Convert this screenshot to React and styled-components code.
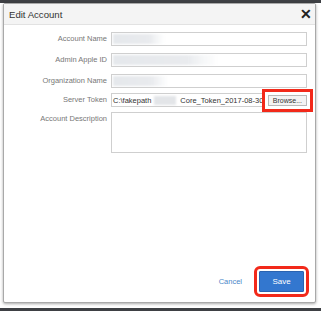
import { Fragment } from 'react'
import styled, { createGlobalStyle } from 'styled-components'

const Global = createGlobalStyle`
  html, body { margin: 0; padding: 0; background: #fff; }
  body { font-family: "Liberation Sans", Arial, sans-serif; }
`

const Page = styled.div`
  width: 321px;
  height: 311px;
  display: flex;
  flex-direction: column;
  background: #fff;
  overflow: hidden;
`

const Strip = styled.div`
  height: 3px;
  flex-shrink: 0;
  background: #3e4044;
`

const Dialog = styled.div`
  margin: 0 5px 0 3px;
  height: 298px;
  border: 1px solid #a9a9a9;
  border-radius: 2px;
  box-shadow: 0 1px 3px rgba(0, 0, 0, 0.35);
  display: flex;
  flex-direction: column;
  background: #fff;
`

const Header = styled.div`
  height: 20px;
  display: flex;
  align-items: center;
  justify-content: space-between;
  padding: 0 3px 0 5px;
  background: #f4f4f4;
  border-bottom: 1px solid #e2e2e2;
  color: #333;
  font-size: 9.6px;
`

const Close = styled.span`
  font-size: 14px;
  font-weight: bold;
  color: #222;
  line-height: 1;
`

const Form = styled.div`
  display: grid;
  grid-template-columns: 103px minmax(0, 1fr);
  column-gap: 4px;
  padding: 7px 8px 0 0;
`

const Label = styled.div`
  text-align: right;
  color: #777;
  font-size: 7.5px;
  line-height: 14px;
  margin-top: ${p => p.$top || 0}px;
`

const Input = styled.div`
  height: 12px;
  border: 1px solid #cfcfcf;
  display: flex;
  align-items: center;
  margin-top: ${p => p.$top || 0}px;
  overflow: hidden;
`

const Blur = styled.span`
  height: 10px;
  width: ${p => p.$w}px;
  margin-left: 1px;
  background: linear-gradient(90deg, #e5e8ec 0%, #e9ebee 70%, rgba(240, 242, 244, 0.7) 85%, rgba(255, 255, 255, 0) 100%);
  filter: blur(0.8px);
`

const TokenRow = styled.div`
  display: flex;
  align-items: center;
  gap: 3px;
  min-width: 0;
  margin-top: ${p => p.$top || 0}px;
`

const TokenField = styled.div`
  flex: 1;
  min-width: 0;
  height: 12px;
  border: 1px solid #cfcfcf;
  display: flex;
  align-items: center;
  padding-left: 1px;
  font-size: 7.5px;
  color: #333;
  white-space: nowrap;
  overflow: hidden;
`

const TokenBlur = styled.span`
  display: inline-block;
  flex-shrink: 0;
  width: 22px;
  height: 9px;
  margin: 0 4px 0 3px;
  background: #e3e5e8;
  filter: blur(1px);
`

const BrowseButton = styled.button`
  flex-shrink: 0;
  font-family: inherit;
  font-size: 7px;
  color: #333;
  height: 11px;
  padding: 0 4px;
  background: #f3f3f3;
  border: 1px solid #b9b9b9;
  border-radius: 0;
  outline: 3px solid #f2291a;
  outline-offset: 3px;
  line-height: 1;
`

const TextArea = styled.div`
  height: 39px;
  border: 1px solid #cfcfcf;
  margin-top: ${p => p.$top || 0}px;
`

const Spacer = styled.div`
  flex: 1;
`

const Footer = styled.div`
  display: flex;
  justify-content: flex-end;
  align-items: center;
  gap: 17px;
  padding: 0 11px 10px 0;
`

const Cancel = styled.span`
  color: #4b87c9;
  font-size: 7.5px;
`

const SaveButton = styled.button`
  font-family: inherit;
  width: 45px;
  height: 21px;
  background: #3377cf;
  border: 1px solid #2a63b0;
  border-radius: 1px;
  color: #fff;
  font-size: 8px;
  outline: 3px solid #f2291a;
  outline-offset: 2px;
`

const fields = [
  { label: 'Account Name', blur: 52 },
  { label: 'Admin Apple ID', blur: 105 },
  { label: 'Organization Name', blur: 55 },
]

export default function App() {
  return (
    <Page>
      <Global />
      <Strip />
      <Dialog>
        <Header>
          <span>Edit Account</span>
          <Close>✕</Close>
        </Header>
        <Form>
          {fields.map((f, i) => (
            <Fragment key={f.label}>
              <Label $top={i ? 7 : 0}>{f.label}</Label>
              <Input $top={i ? 7 : 0}>
                <Blur $w={f.blur} />
              </Input>
            </Fragment>
          ))}
          <Label $top={5}>Server Token</Label>
          <TokenRow $top={5}>
            <TokenField>
              C:\fakepath<TokenBlur />Core_Token_2017-08-30_CORE.p7m
            </TokenField>
            <BrowseButton>Browse...</BrowseButton>
          </TokenRow>
          <Label $top={5}>Account Description</Label>
          <TextArea $top={5} />
        </Form>
        <Spacer />
        <Footer>
          <Cancel>Cancel</Cancel>
          <SaveButton>Save</SaveButton>
        </Footer>
      </Dialog>
      <Spacer />
      <Strip />
    </Page>
  )
}
